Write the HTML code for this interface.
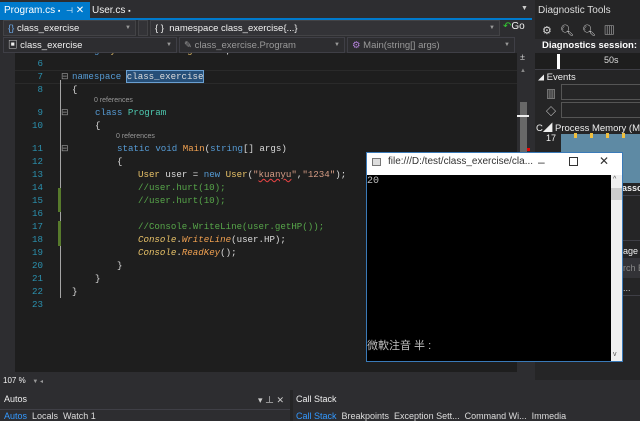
<!DOCTYPE html>
<html><head><meta charset="utf-8"><style>
*{margin:0;padding:0;box-sizing:border-box}
body{width:640px;height:421px;overflow:hidden;background:#2d2d30;font-family:"Liberation Sans","Noto Sans CJK TC",sans-serif;font-size:10px;color:#f1f1f1;position:relative}
.a{position:absolute;white-space:nowrap}
.code{font-family:"Liberation Mono",monospace;font-size:9.15px;line-height:13px}
.L{position:relative;height:13px}
.ln{position:absolute;left:0;width:28px;text-align:right;color:#2b91af}
.fd{position:absolute;left:46px;color:#999}
.t{position:absolute;white-space:pre}
.kw{color:#569cd6}.ty{color:#4ec9b0}.cm{color:#57a64a}.st{color:#d69d85}.id{color:#dcdcdc}.ut{color:#e8c268}.me{color:#f0a050;font-style:italic}.mn{color:#f0a050}
.ref{font-family:"Liberation Sans",sans-serif;font-size:7px;color:#999;height:10px;line-height:10px;position:relative}
.dd{background:#333337;border:1px solid #434346;height:16px;color:#f1f1f1;font-size:9.5px;padding:1px 4px;line-height:13px}
</style></head><body>
<!-- tab bar -->
<div class="a" style="left:0;top:0;width:532px;height:18px;background:#2d2d30"></div>
<div class="a" style="left:0;top:2px;width:90px;height:17px;background:#007acc;color:#fff;font-size:10px;padding:3px 4px">Program.cs <span style="font-size:7px">▪</span>&nbsp; <span style="font-size:8px">⊣</span> ✕</div>
<div class="a" style="left:92px;top:5px;color:#f1f1f1;font-size:10px">User.cs <span style="font-size:7px">▪</span></div>
<div class="a" style="left:0;top:18px;width:532px;height:2px;background:#007acc"></div>
<div class="a" style="left:521px;top:5px;font-size:7px;color:#ccc">▼</div>
<!-- nav bars -->
<div class="a" style="left:0;top:20px;width:532px;height:33px;background:#2d2d30"></div>
<div class="a dd" style="left:3px;top:20px;width:133px"><span style="color:#6aa7e6">{}</span> class_exercise<span style="float:right;font-size:6px;color:#999">▼</span></div>
<div class="a dd" style="left:138px;top:20px;width:10px;padding:0"></div>
<div class="a dd" style="left:150px;top:20px;width:350px">{ }&nbsp; namespace class_exercise{...}<span style="float:right;font-size:6px;color:#999">▼</span></div>
<div class="a" style="left:503px;top:21px;font-size:10px;color:#f1f1f1"><span style="color:#3c3">↶</span>Go</div>
<div class="a dd" style="left:3px;top:37px;width:174px;background:#2d2d30;border-color:#3f3f46">▣ class_exercise<span style="float:right;font-size:6px;color:#999">▼</span></div>
<div class="a dd" style="left:179px;top:37px;width:166px;background:#2d2d30;border-color:#3f3f46;color:#999">✎ class_exercise.Program<span style="float:right;font-size:6px;color:#999">▼</span></div>
<div class="a dd" style="left:347px;top:37px;width:168px;background:#2d2d30;border-color:#3f3f46;color:#999"><span style="color:#b180d7">⚙</span> Main(string[] args)<span style="float:right;font-size:6px;color:#999">▼</span></div>
<!-- editor -->
<div class="a" style="left:15px;top:53px;width:502px;height:319px;background:#1e1e1e;overflow:hidden">
<div class="a" style="left:0;top:17px;width:502px;height:14px;border-top:1px solid #2a2a2a;border-bottom:1px solid #2a2a2a"></div>
<div class="a" style="left:45px;top:27px;width:1px;height:218px;background:#a5a5a5"></div>
<div class="a" style="left:43px;top:135px;width:3px;height:24px;background:#577a2c"></div>
<div class="a" style="left:43px;top:168px;width:3px;height:25px;background:#577a2c"></div>
<div class="code a" style="left:0;top:-9px;width:502px;white-space:normal">
<div class="L"><span class="t" style="left:57px"><span class="kw">using</span> <span class="ut">System.Threading.Tasks</span>;</span></div>
<div class="L"><span class="ln">6</span></div>
<div class="L"><span class="ln">7</span><span class="fd">⊟</span><span class="t" style="left:57px"><span class="kw">namespace</span> <span class="id" style="background:#264f78;outline:1px solid #6a9fd0">class_exercise</span></span></div>
<div class="L"><span class="ln">8</span><span class="t id" style="left:57px">{</span></div>
<div class="ref"><span class="t" style="left:79px">0 references</span></div>
<div class="L"><span class="ln">9</span><span class="fd">⊟</span><span class="t" style="left:80px"><span class="kw">class</span> <span class="ty">Program</span></span></div>
<div class="L"><span class="ln">10</span><span class="t id" style="left:80px">{</span></div>
<div class="ref"><span class="t" style="left:101px">0 references</span></div>
<div class="L"><span class="ln">11</span><span class="fd">⊟</span><span class="t" style="left:102px"><span class="kw">static void</span> <span class="mn">Main</span><span class="id">(</span><span class="kw">string</span><span class="id">[] args)</span></span></div>
<div class="L"><span class="ln">12</span><span class="t id" style="left:102px">{</span></div>
<div class="L"><span class="ln">13</span><span class="t" style="left:123px"><span class="ut">User</span> <span class="id">user = </span><span class="kw">new</span> <span class="ut">User</span><span class="id">(</span><span class="st">"<u style="text-decoration-color:#e44;text-decoration-style:wavy">kuanyu</u>"</span><span class="id">,</span><span class="st">"1234"</span><span class="id">);</span></span></div>
<div class="L"><span class="ln">14</span><span class="t cm" style="left:123px">//user.hurt(10);</span></div>
<div class="L"><span class="ln">15</span><span class="t cm" style="left:123px">//user.hurt(10);</span></div>
<div class="L"><span class="ln">16</span></div>
<div class="L"><span class="ln">17</span><span class="t cm" style="left:123px">//Console.WriteLine(user.getHP());</span></div>
<div class="L"><span class="ln">18</span><span class="t" style="left:123px"><span class="ut" style="font-style:italic">Console</span><span class="id">.</span><span class="me">WriteLine</span><span class="id">(user.HP);</span></span></div>
<div class="L"><span class="ln">19</span><span class="t" style="left:123px"><span class="ut" style="font-style:italic">Console</span><span class="id">.</span><span class="me">ReadKey</span><span class="id">();</span></span></div>
<div class="L"><span class="ln">20</span><span class="t id" style="left:102px">}</span></div>
<div class="L"><span class="ln">21</span><span class="t id" style="left:80px">}</span></div>
<div class="L"><span class="ln">22</span><span class="t id" style="left:57px">}</span></div>
<div class="L"><span class="ln">23</span></div>
</div>
</div>
<!-- editor scrollbar -->
<div class="a" style="left:517px;top:53px;width:15px;height:319px;background:#2d2d30"></div>
<div class="a" style="left:520px;top:52px;color:#ccc;font-size:9px">±</div>
<div class="a" style="left:520px;top:68px;color:#888;font-size:6px">▲</div>
<div class="a" style="left:520px;top:102px;width:7px;height:260px;background:#686868"></div>
<div class="a" style="left:517px;top:115px;width:12px;height:2px;background:#eee"></div>
<div class="a" style="left:527px;top:148px;width:3px;height:3px;background:#e00"></div>
<!-- zoom bar -->
<div class="a" style="left:0;top:372px;width:532px;height:16px;background:#2d2d30;font-size:8px;color:#f1f1f1;padding:4px 3px">107 % &nbsp; <span style="font-size:6px;color:#999">▼ ◂</span></div>
<div class="a" style="left:532px;top:53px;width:3px;height:337px;background:#2d2d30"></div>
<!-- diag panel -->
<div class="a" style="left:535px;top:0;width:105px;height:390px;background:#252526"></div>
<div class="a" style="left:538px;top:5px;color:#ddd;font-size:10px">Diagnostic Tools</div>
<div class="a" style="left:542px;top:22px;color:#ddd;font-size:11px;letter-spacing:8px">⚙🔍︎🔍︎▥</div>
<div class="a" style="left:535px;top:39px;width:105px;height:14px;background:#2d2d30"></div>
<div class="a" style="left:542px;top:40px;color:#fff;font-size:9.5px;font-weight:bold">Diagnostics session: 56</div>
<div class="a" style="left:535px;top:53px;width:105px;height:17px;background:#1e1e1e;border-bottom:1px solid #3f3f46"></div>
<div class="a" style="left:557px;top:54px;width:3px;height:15px;background:#fff"></div>
<div class="a" style="left:604px;top:55px;color:#ddd;font-size:9px">50s</div>
<div class="a" style="left:538px;top:72px;color:#eee;font-size:9.5px"><span style="font-size:6px">◢</span> Events</div>
<div class="a" style="left:561px;top:84px;width:79px;height:16px;border:1px solid #555;border-right:0"></div>
<div class="a" style="left:561px;top:102px;width:79px;height:16px;border:1px solid #555;border-right:0"></div>
<div class="a" style="left:546px;top:86px;color:#eee;font-size:10px">▥</div>
<div class="a" style="left:546px;top:103px;color:#eee;font-size:10px">◇</div>
<div class="a" style="left:536px;top:120px;color:#eee;font-size:9.5px">C◢ Process Memory (MB)</div>
<div class="a" style="left:546px;top:133px;color:#eee;font-size:9px">17</div>
<div class="a" style="left:561px;top:134px;width:79px;height:49px;background:#5e8aa4"></div>
<div class="a" style="left:574px;top:133px;width:3px;height:5px;background:#f0c040"></div>
<div class="a" style="left:590px;top:133px;width:3px;height:5px;background:#f0c040"></div>
<div class="a" style="left:606px;top:133px;width:3px;height:5px;background:#f0c040"></div>
<div class="a" style="left:622px;top:133px;width:3px;height:5px;background:#f0c040"></div>
<div class="a" style="left:622px;top:183px;color:#eee;font-size:9px;font-weight:bold">asso</div>
<div class="a" style="left:535px;top:195px;width:105px;height:1px;background:#3f3f46"></div>
<div class="a" style="left:535px;top:240px;width:105px;height:1px;background:#3f3f46"></div>
<div class="a" style="left:623px;top:246px;color:#eee;font-size:9px">age</div>
<div class="a" style="left:535px;top:258px;width:105px;height:20px;background:#333337"></div>
<div class="a" style="left:623px;top:263px;color:#888;font-size:9px">rch E</div>
<div class="a" style="left:623px;top:283px;color:#ccc;font-size:9px">...</div>
<div class="a" style="left:535px;top:295px;width:105px;height:1px;background:#3f3f46"></div>
<div class="a" style="left:535px;top:380px;width:105px;height:10px;background:#2d2d30"></div>
<!-- bottom panes -->
<div class="a" style="left:0;top:390px;width:290px;height:31px;background:#2d2d30"></div>
<div class="a" style="left:4px;top:394px;color:#eee;font-size:9px">Autos</div>
<div class="a" style="left:258px;top:393px;color:#ccc;font-size:9px">▾ ⊥ ✕</div>
<div class="a" style="left:0;top:409px;width:290px;height:1px;background:#3f3f46"></div>
<div class="a" style="left:4px;top:411px;font-size:9px;color:#ddd"><span style="color:#3399ff">Autos</span> &nbsp;Locals &nbsp;Watch 1</div>
<div class="a" style="left:290px;top:390px;width:350px;height:31px;background:#2d2d30;border-left:3px solid #252526"></div>
<div class="a" style="left:296px;top:394px;color:#eee;font-size:9px">Call Stack</div>
<div class="a" style="left:296px;top:411px;font-size:9px;color:#ddd"><span style="color:#3399ff">Call Stack</span> &nbsp;Breakpoints &nbsp;Exception Sett... &nbsp;Command Wi... &nbsp;Immedia</div>
<!-- console window -->
<div class="a" style="left:366px;top:152px;width:257px;height:210px;border:1px solid #3a7ab8;background:#000"></div>
<div class="a" style="left:367px;top:153px;width:255px;height:22px;background:#fff"></div>
<div class="a" style="left:372px;top:158px;width:9px;height:8px;border:1px solid #777;background:#ddd"></div>
<div class="a" style="left:388px;top:156px;color:#333;font-size:10px">file:///D:/test/class_exercise/cla...</div>
<div class="a" style="left:538px;top:155px;color:#333;font-size:12px">–</div>
<div class="a" style="left:569px;top:157px;width:9px;height:9px;border:1px solid #333"></div>
<div class="a" style="left:599px;top:154px;color:#333;font-size:12px">✕</div>
<div class="a" style="left:611px;top:175px;width:11px;height:186px;background:#f0f0f0"></div>
<div class="a" style="left:611px;top:188px;width:11px;height:12px;background:#cdcdcd"></div>
<div class="a" style="left:613px;top:176px;color:#555;font-size:7px">^</div>
<div class="a" style="left:613px;top:351px;color:#555;font-size:7px">v</div>
<div class="a" style="left:367px;top:176px;color:#c0c0c0;font-size:10px;font-family:'Liberation Mono',monospace">20</div>
<div class="a" style="left:367px;top:337px;color:#c0c0c0;font-size:11px;font-family:'Liberation Sans','Noto Sans CJK TC',sans-serif">微軟注音 半 :</div>
</body></html>
